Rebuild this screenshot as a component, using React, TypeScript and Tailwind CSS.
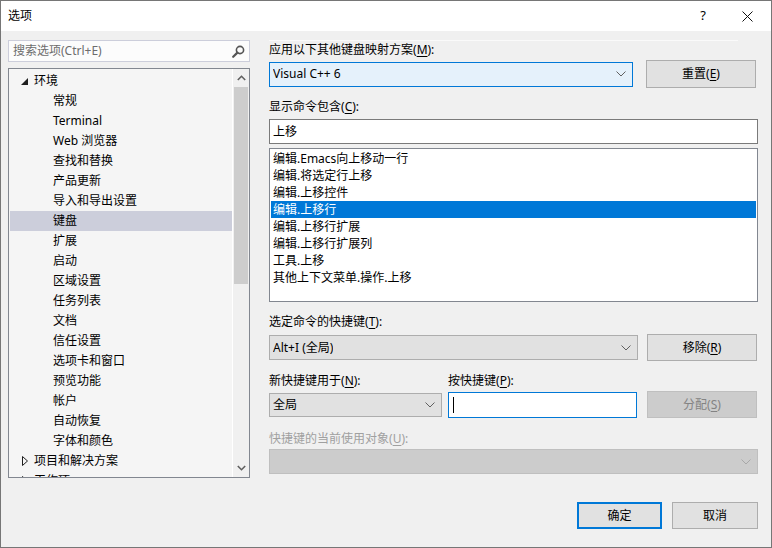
import type { ReactNode } from "react";

const FONT = {
  fontFamily: '"Noto Sans", "Noto Sans CJK SC", sans-serif',
};

// tree rows, level 0 = top node, level 1 = child
const TREE: { label: string; level: 0 | 1; expanded?: boolean; selected?: boolean }[] = [
  { label: "环境", level: 0, expanded: true },
  { label: "常规", level: 1 },
  { label: "Terminal", level: 1 },
  { label: "Web 浏览器", level: 1 },
  { label: "查找和替换", level: 1 },
  { label: "产品更新", level: 1 },
  { label: "导入和导出设置", level: 1 },
  { label: "键盘", level: 1, selected: true },
  { label: "扩展", level: 1 },
  { label: "启动", level: 1 },
  { label: "区域设置", level: 1 },
  { label: "任务列表", level: 1 },
  { label: "文档", level: 1 },
  { label: "信任设置", level: 1 },
  { label: "选项卡和窗口", level: 1 },
  { label: "预览功能", level: 1 },
  { label: "帐户", level: 1 },
  { label: "自动恢复", level: 1 },
  { label: "字体和颜色", level: 1 },
  { label: "项目和解决方案", level: 0, expanded: false },
  { label: "工作项", level: 0, expanded: false },
];

const COMMANDS = [
  "编辑.Emacs向上移动一行",
  "编辑.将选定行上移",
  "编辑.上移控件",
  "编辑.上移行",
  "编辑.上移行扩展",
  "编辑.上移行扩展列",
  "工具.上移",
  "其他上下文菜单.操作.上移",
];

function Label({ text, mn, disabled }: { text: string; mn: string; disabled?: boolean }) {
  return (
    <div
      className={`h-4 text-[12px] leading-4 ${disabled ? "text-[#a0a0a0]" : "text-black"}`}
    >
      {text}(<span className="underline underline-offset-2">{mn}</span>):
    </div>
  );
}

function Chevron({ color = "#606060" }: { color?: string }) {
  return (
    <svg width="10" height="6" viewBox="0 0 10 6" className="shrink-0">
      <path d="M0.5 0.5 L5 5 L9.5 0.5" fill="none" stroke={color} strokeWidth="1" />
    </svg>
  );
}

function Combo({
  value,
  className,
  disabled,
}: {
  value?: string;
  className: string;
  disabled?: boolean;
}) {
  return (
    <div
      className={`flex items-center justify-between border pl-[3px] pr-[6px] text-[12px] ${className}`}
    >
      <span className="truncate">{value}</span>
      <Chevron color={disabled ? "#a8a8a8" : "#606060"} />
    </div>
  );
}

function Button({
  children,
  className = "",
  disabled,
}: {
  children: ReactNode;
  className?: string;
  disabled?: boolean;
}) {
  return (
    <div
      className={`flex items-center justify-center text-[12px] ${
        disabled
          ? "border border-[#bfbfbf] bg-[#cccccc] text-[#838383]"
          : "border border-[#adadad] bg-[#e1e1e1] text-black"
      } ${className}`}
    >
      {children}
    </div>
  );
}

function Mn({ children }: { children: ReactNode }) {
  return <span className="underline underline-offset-2">{children}</span>;
}

function Tree() {
  return (
    <div className="flex h-[410px] w-[242px] overflow-hidden border border-[#828790] bg-[#f5f5f5]">
      <div className="flex-1 overflow-hidden pt-[2px] pl-px">
        {TREE.map((row) => (
          <div
            key={row.label}
            className={`flex h-5 items-center text-[12px] leading-5 ${
              row.selected ? "bg-[#cccedb]" : ""
            }`}
          >
            {row.level === 0 ? (
              <>
                <span className="flex w-[24px] justify-end pr-[6px]">
                  {row.expanded ? (
                    <svg width="7" height="7" viewBox="0 0 7 7">
                      <path d="M7 0 L7 7 L0 7 Z" fill="#1e1e1e" />
                    </svg>
                  ) : (
                    <svg width="6" height="10" viewBox="0 0 6 10">
                      <path d="M0.5 0.5 L5.5 5 L0.5 9.5 Z" fill="none" stroke="#1e1e1e" strokeWidth="1" />
                    </svg>
                  )}
                </span>
                <span>{row.label}</span>
              </>
            ) : (
              <span className="pl-[43px]">{row.label}</span>
            )}
          </div>
        ))}
      </div>
      <div className="flex w-[17px] flex-col border-l border-white bg-[#f0f0f0]">
        <div className="flex h-[18px] items-center justify-center">
          <svg width="9" height="6" viewBox="0 0 9 6">
            <path d="M0.8 5 L4.5 1.3 L8.2 5" fill="none" stroke="#606060" strokeWidth="1.6" />
          </svg>
        </div>
        <div className="mx-px h-[197px] bg-[#cdcdcd]" />
        <div className="flex-1" />
        <div className="flex h-[18px] items-center justify-center">
          <svg width="9" height="6" viewBox="0 0 9 6">
            <path d="M0.8 1 L4.5 4.7 L8.2 1" fill="none" stroke="#606060" strokeWidth="1.6" />
          </svg>
        </div>
      </div>
    </div>
  );
}

export default function App() {
  return (
    <div
      className="flex h-[548px] w-[772px] flex-col overflow-hidden border border-[#767676] bg-[#f0f0f0] text-black"
      style={FONT}
    >
      {/* title bar */}
      <div className="flex h-[30px] items-center bg-white">
        <span className="pl-[7px] text-[12px]">选项</span>
        <div className="flex-1" />
        <span className="w-[40px] text-center text-[13px]">?</span>
        <span className="flex w-[48px] justify-center">
          <svg width="11" height="11" viewBox="0 0 11 11">
            <path d="M0.5 0.5 L10.5 10.5 M10.5 0.5 L0.5 10.5" stroke="#111" strokeWidth="1" />
          </svg>
        </span>
      </div>

      <div className="flex flex-1">
        {/* left pane */}
        <div className="flex flex-col pl-[7px] pt-[9px]">
          <div className="flex h-[22px] w-[242px] items-center justify-between border border-[#cccedb] bg-[#fcfcfc] pl-[4px] pr-[4px]">
            <span className="text-[12px] text-[#6d6d6d]">搜索选项(Ctrl+E)</span>
            <svg width="13" height="13" viewBox="0 0 13 13">
              <circle cx="8" cy="5" r="3.6" fill="none" stroke="#555" strokeWidth="1.6" />
              <path d="M5.4 7.6 L1.2 11.8" stroke="#555" strokeWidth="2.2" strokeLinecap="round" />
            </svg>
          </div>
          <div className="mt-[6px]">
            <Tree />
          </div>
        </div>

        {/* right pane */}
        <div className="ml-[19px] flex w-[489px] flex-col pt-[9px]">
          <div className="h-px w-[469px] bg-[#fafafa]" />
          <div className="mt-px">
            <Label text="应用以下其他键盘映射方案" mn="M" />
          </div>
          <div className="mt-[2px] flex items-center">
            <Combo
              value="Visual C++ 6"
              className="h-[25px] w-[364px] border-[#0078d7] bg-[#e5f1fb]"
            />
            <Button className="ml-[13px] h-[28px] w-[110px]">
              重置(<Mn>E</Mn>)
            </Button>
          </div>

          <div className="mt-[11px]">
            <Label text="显示命令包含" mn="C" />
          </div>
          <div className="mt-[4px] flex h-[25px] w-[489px] items-center border border-[#7a7a7a] bg-white pl-[3px] text-[12px]">
            上移
          </div>

          <div className="mt-[4px] h-[154px] w-[489px] border border-[#828790] bg-white p-px">
            {COMMANDS.map((c) => (
              <div
                key={c}
                className={`h-[17px] pl-[2px] text-[12px] leading-[17px] ${
                  c === "编辑.上移行" ? "bg-[#0078d7] text-white" : ""
                }`}
              >
                {c}
              </div>
            ))}
          </div>

          <div className="mt-[12px]">
            <Label text="选定命令的快捷键" mn="T" />
          </div>
          <div className="mt-[4px] flex items-center">
            <Combo
              value="Alt+I (全局)"
              className="h-[25px] w-[369px] border-[#adadad] bg-[#e1e1e1]"
            />
            <Button className="ml-[9px] h-[27px] w-[110px]">
              移除(<Mn>R</Mn>)
            </Button>
          </div>

          <div className="mt-[12px] flex">
            <div className="w-[179px]">
              <Label text="新快捷键用于" mn="N" />
            </div>
            <Label text="按快捷键" mn="P" />
          </div>
          <div className="mt-[2px] flex items-center">
            <Combo
              value="全局"
              className="h-[24px] w-[173px] border-[#adadad] bg-[#e1e1e1]"
            />
            <div className="ml-[6px] flex h-[26px] w-[189px] items-center border border-[#0078d7] bg-white pl-[4px]">
              <div className="h-[16px] w-px bg-black" />
            </div>
            <Button disabled className="ml-[10px] h-[27px] w-[110px]">
              分配(<Mn>S</Mn>)
            </Button>
          </div>

          <div className="mt-[13px]">
            <Label text="快捷键的当前使用对象" mn="U" disabled />
          </div>
          <div className="mt-[2px]">
            <Combo disabled className="h-[25px] w-[489px] border-[#bfbfbf] bg-[#cccccc]" />
          </div>

          <div className="mt-[28px] flex justify-end">
            <Button className="h-[27px] w-[85px] !border-2 !border-[#0078d7]">确定</Button>
            <Button className="ml-[10px] h-[27px] w-[86px]">取消</Button>
          </div>
        </div>
      </div>
    </div>
  );
}
